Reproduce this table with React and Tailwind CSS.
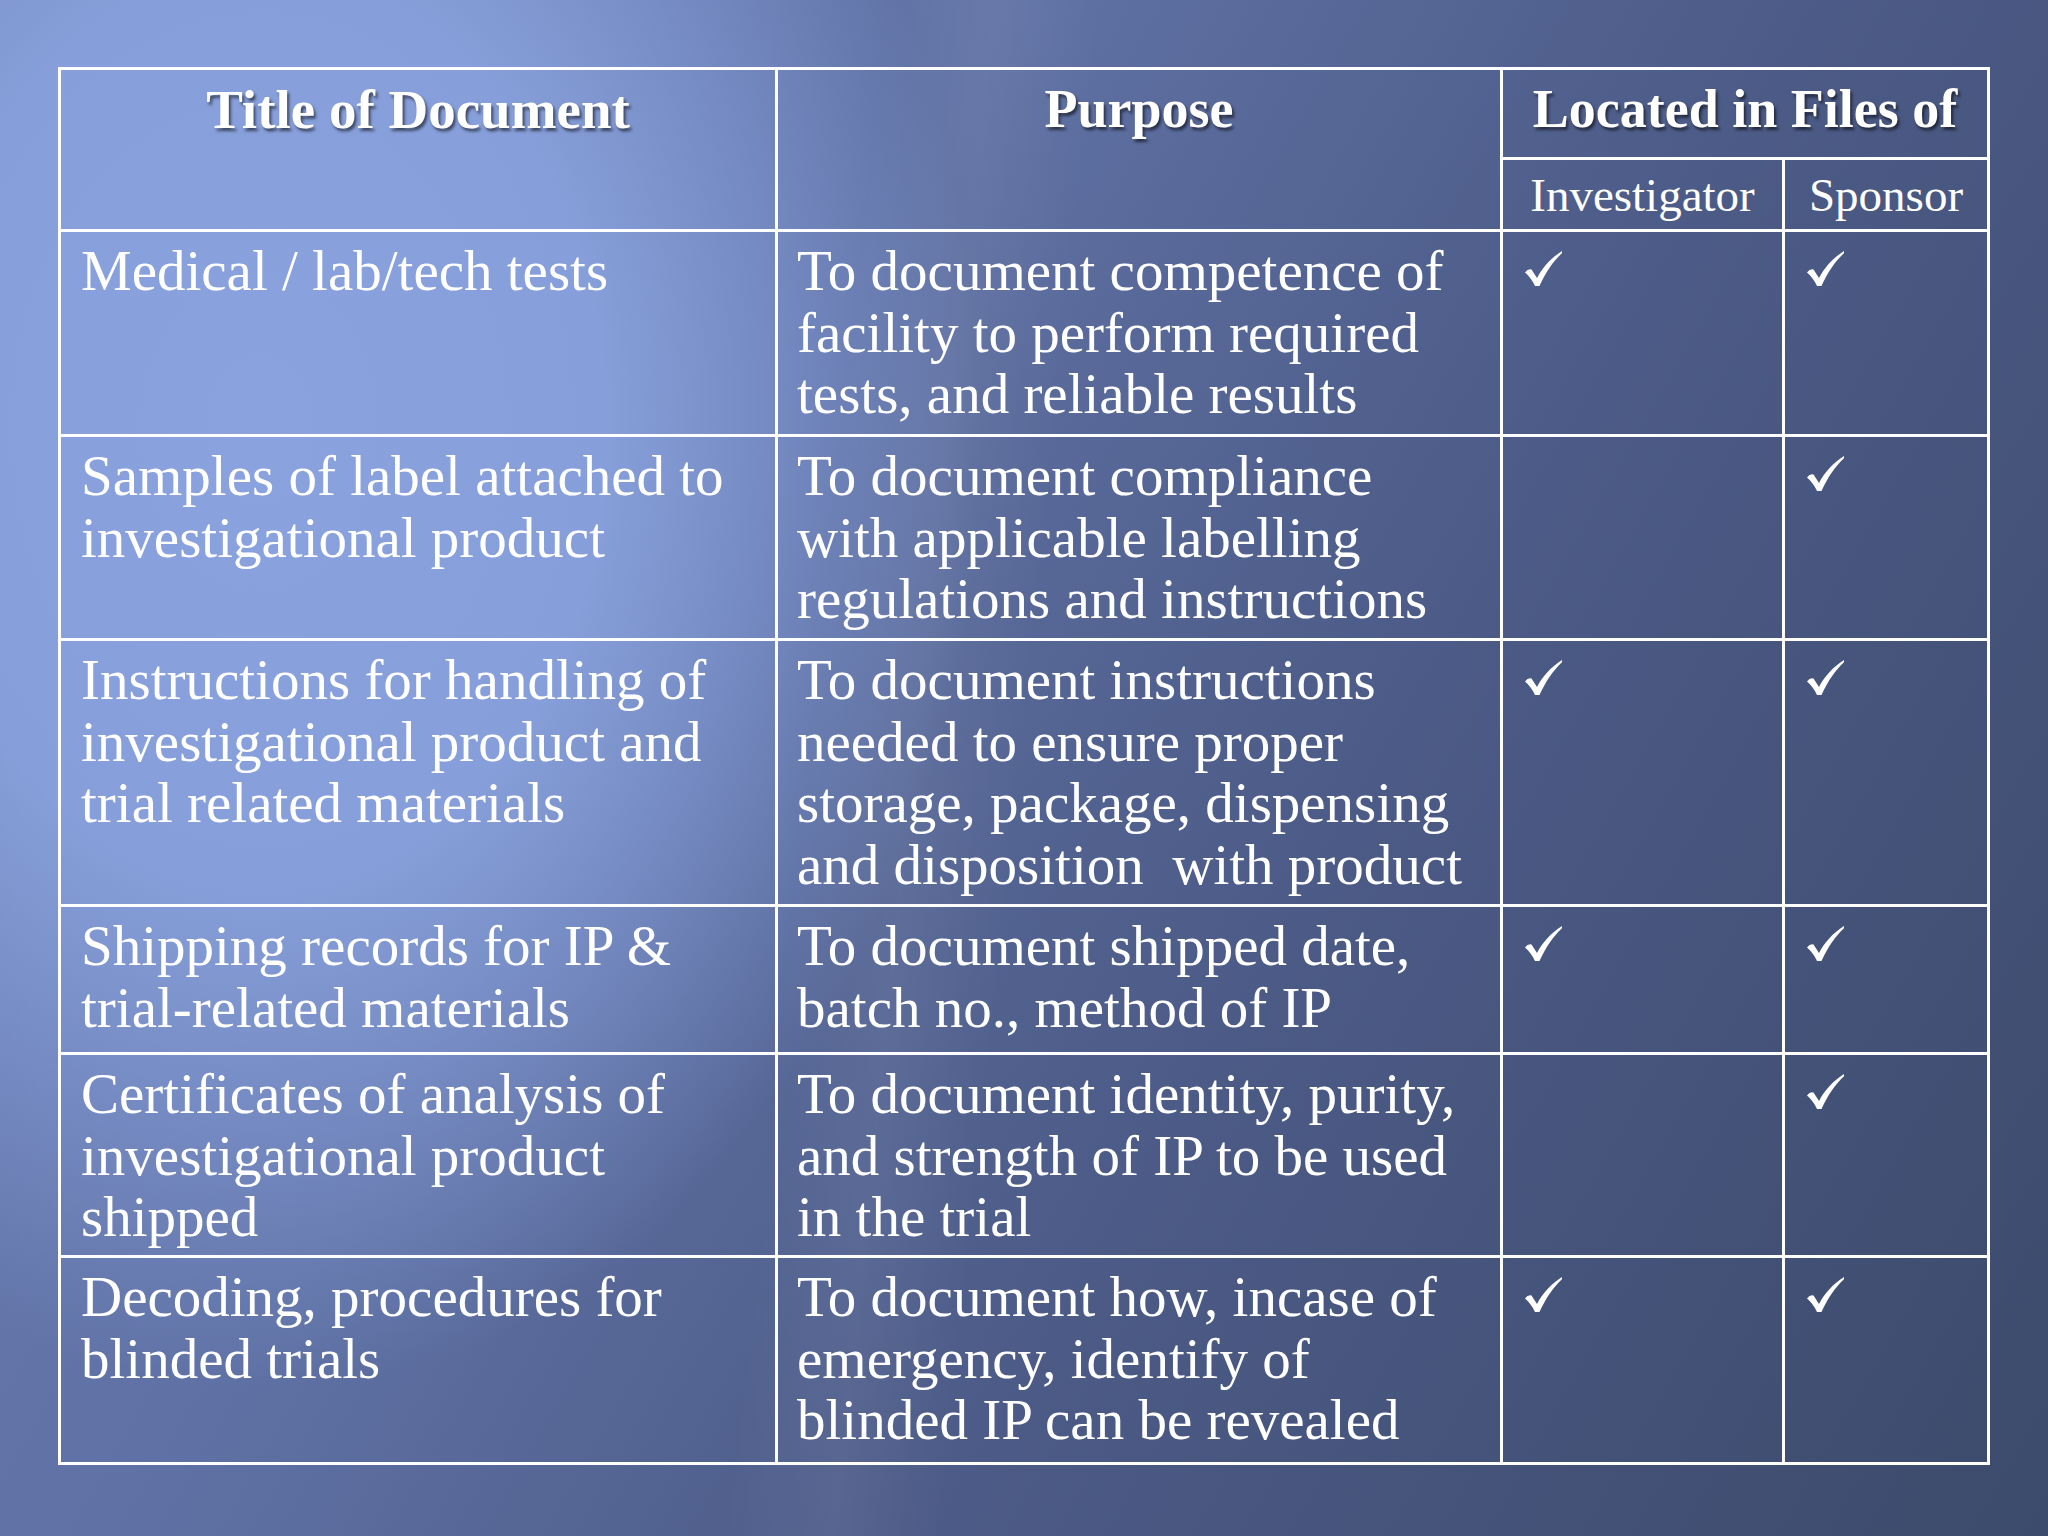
import React from 'react';

const rows = [
    {
        title: ['Medical / lab/tech tests'],
        purpose: ['To document competence of', 'facility to perform required', 'tests, and reliable results'],
        inv: true, sp: true, h: 'h-[205px]',
    },
    {
        title: ['Samples of label attached to', 'investigational product'],
        purpose: ['To document compliance', 'with applicable labelling', 'regulations and instructions'],
        inv: false, sp: true, h: 'h-[204px]',
    },
    {
        title: ['Instructions for handling of', 'investigational product and', 'trial related materials'],
        purpose: ['To document instructions', 'needed to ensure proper', 'storage, package, dispensing', 'and disposition\u00a0 with product'],
        inv: true, sp: true, h: 'h-[266px]',
    },
    {
        title: ['Shipping records for IP &', 'trial-related materials'],
        purpose: ['To document shipped date,', 'batch no., method of IP'],
        inv: true, sp: true, h: 'h-[148px]',
    },
    {
        title: ['Certificates of analysis of', 'investigational product', 'shipped'],
        purpose: ['To document identity, purity,', 'and strength of IP to be used', 'in the trial'],
        inv: false, sp: true, h: 'h-[203px]',
    },
    {
        title: ['Decoding, procedures for', 'blinded trials'],
        purpose: ['To document how, incase of', 'emergency, identify of', 'blinded IP can be revealed'],
        inv: true, sp: true, h: 'h-[207px]',
    },
];

// calligraphic tick, thick short stroke + tapering long stroke
function Check() {
    return (
        <svg width="37" height="35" viewBox="0 0 37 35" className="block">
            <path
                d="M0 21.5 Q3 17.5 6.5 18.5 L12 27 C17.5 16.5 26 7 37 0 L37 2.2 C28.5 10 21 20.5 14.5 35 L10 35 C7.5 29.5 4 25 0 21.5 Z"
                fill="#ffffff"
            />
        </svg>
    );
}

function Lines({ lines }) {
    return lines.map((l, i) => (
        <div key={i} className="whitespace-nowrap">{l}</div>
    ));
}

export default function App() {
    const head = 'font-bold text-[54px] leading-[61px] [text-shadow:2px_3px_3px_rgba(0,0,0,0.55)]';
    const cell = 'border-[3px] border-white align-top';

    return (
        <div className="w-[2048px] h-[1536px] overflow-hidden bg-[linear-gradient(96deg,transparent_40%,rgba(255,255,255,0.05)_45%,transparent_50%),radial-gradient(ellipse_720px_960px_at_260px_430px,#8aa2de_0%,#869ed9_48%,rgba(134,158,217,0)_100%),linear-gradient(120deg,#6b7eb4_0%,#5f71a4_35%,#4d5c88_60%,#3c4a6b_100%)] pt-[67px] pl-[58px] font-['Liberation_Serif','Times_New_Roman',serif] text-white">
            <table className="table-fixed border-collapse w-[1929px]">
                <colgroup>
                    <col className="w-[717px]" />
                    <col className="w-[725px]" />
                    <col className="w-[282px]" />
                    <col className="w-[205px]" />
                </colgroup>
                <thead>
                    <tr>
                        <th rowSpan={2} className={`${cell} ${head} text-[55px] text-center pt-[9px]`}>Title of Document</th>
                        <th rowSpan={2} className={`${cell} ${head} text-center pt-[9px]`}>Purpose</th>
                        <th colSpan={2} className={`${cell} ${head} text-center pt-[9px] h-[90px]`}>Located in Files of</th>
                    </tr>
                    <tr>
                        <th className={`${cell} font-normal text-[47px] leading-[54px] text-center pt-[8px] h-[72px]`}>Investigator</th>
                        <th className={`${cell} font-normal text-[47px] leading-[54px] text-center pt-[8px]`}>Sponsor</th>
                    </tr>
                </thead>
                <tbody className="text-[57px] leading-[61.5px]">
                    {rows.map((r, i) => (
                        <tr key={i}>
                            <td className={`${cell} ${r.h} pl-[20px] pt-[8px]`}>
                                <Lines lines={r.title} />
                            </td>
                            <td className={`${cell} pl-[19px] pt-[8px]`}>
                                <Lines lines={r.purpose} />
                            </td>
                            <td className={`${cell} pl-[22px] pt-[19px]`}>
                                {r.inv && <Check />}
                            </td>
                            <td className={`${cell} pl-[22px] pt-[19px]`}>
                                {r.sp && <Check />}
                            </td>
                        </tr>
                    ))}
                </tbody>
            </table>
        </div>
    );
}
